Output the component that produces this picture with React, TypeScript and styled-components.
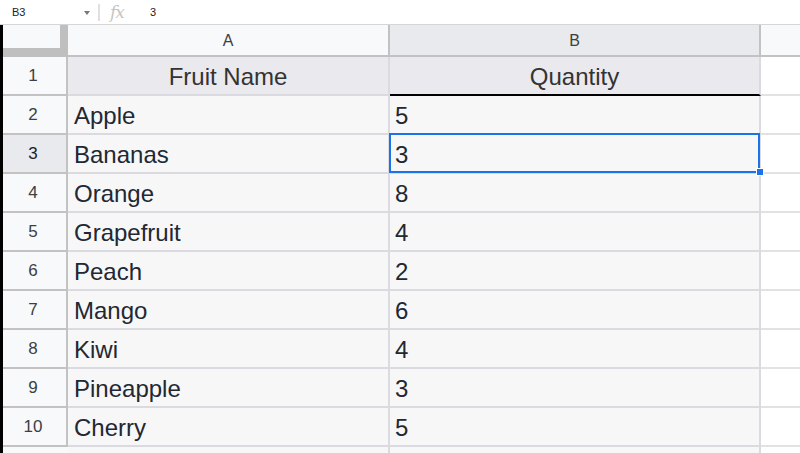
import React from "react";
import styled, { createGlobalStyle, css } from "styled-components";

const Global = createGlobalStyle`
  html, body { margin: 0; padding: 0; background: #ffffff; overflow: hidden; }
  body { font-family: "Liberation Sans", Arial, sans-serif; }
  #root { width: 800px; height: 453px; }
`;

const Page = styled.div`
  width: 800px;
  height: 453px;
  display: flex;
  flex-direction: column;
  overflow: hidden;
`;

const FormulaBar = styled.div`
  height: 24px;
  flex: 0 0 24px;
  display: flex;
  align-items: center;
  border-bottom: 1px solid #d6d6d6;
  background: #ffffff;
  font-size: 11px;
  color: #222;
`;

const NameBox = styled.div`
  width: 98px;
  padding-left: 12px;
  padding-right: 8px;
  display: flex;
  align-items: center;
  justify-content: space-between;
  box-sizing: border-box;
`;

const Caret = styled.span`
  width: 0;
  height: 0;
  border-left: 3px solid transparent;
  border-right: 3px solid transparent;
  border-top: 4px solid #777;
  margin-top: 2px;
`;

const Separator = styled.div`
  width: 2px;
  height: 17px;
  background: #e0e0e0;
`;

const Fx = styled.span`
  font-family: "DejaVu Serif", "Liberation Serif", serif;
  font-style: italic;
  font-size: 17px;
  color: #c4c4c4;
  margin-left: 10px;
  width: 40px;
  letter-spacing: -1px;
`;

const Body = styled.div`
  flex: 1;
  display: flex;
  min-height: 0;
`;

const Strip = styled.div`
  width: 3px;
  flex: 0 0 3px;
  background: #000;
`;

const Sheet = styled.div`
  flex: 1;
  display: grid;
  grid-template-columns: 65px 322px 371px 1fr;
  grid-template-rows: 32px repeat(10, 39px) 1fr;
  background: #ffffff;
`;

const Corner = styled.div`
  background: #f8f9fa;
  border-right: 8px solid #bfbfbf;
  border-bottom: 9px solid #bfbfbf;
`;

const ColHeader = styled.div<{ $selected?: boolean; $last?: boolean }>`
  background: ${(p) => (p.$selected ? "#e8eaed" : "#f8f9fa")};
  border-bottom: 2px solid #c2c2c2;
  border-right: ${(p) => (p.$last ? "none" : "2px solid #c2c2c2")};
  display: flex;
  align-items: center;
  justify-content: center;
  font-size: 16px;
  color: #3c4043;
  padding-top: 1px;
`;

const RowHeader = styled.div<{ $selected?: boolean }>`
  background: ${(p) => (p.$selected ? "#e8eaed" : "#f8f9fa")};
  border-right: 2px solid #c2c2c2;
  border-bottom: 2px solid #c2c2c2;
  display: flex;
  align-items: center;
  justify-content: center;
  font-size: 17px;
  color: ${(p) => (p.$selected ? "#202124" : "#3c4043")};
  padding-right: 3px;
  padding-top: 1px;
`;

const Cell = styled.div<{
  $head?: boolean;
  $thick?: boolean;
  $selected?: boolean;
}>`
  position: relative;
  background: ${(p) => (p.$head ? "#e9e9ee" : "#f7f7f7")};
  border-right: 2px solid #dadae0;
  border-bottom: ${(p) => (p.$thick ? "2px solid #000" : "2px solid #dadae0")};
  display: flex;
  align-items: center;
  justify-content: ${(p) => (p.$head ? "center" : "flex-start")};
  padding-left: ${(p) => (p.$head ? "0" : "6px")};
  font-size: 24px;
  color: ${(p) => (p.$head ? "#333333" : "#222833")};
  padding-top: 3px;
  box-sizing: border-box;
  ${(p) =>
    p.$selected &&
    css`
      &::after {
        content: "";
        position: absolute;
        left: -1px;
        top: -2px;
        right: -1px;
        bottom: -1px;
        border: 2px solid #1a73e8;
        pointer-events: none;
      }
    `}
`;

const NumCell = styled(Cell)`
  padding-left: 5px;
`;

const Handle = styled.span`
  position: absolute;
  right: -5px;
  bottom: -4px;
  width: 6px;
  height: 6px;
  background: #1a73e8;
  border: 1px solid #ffffff;
  z-index: 2;
`;

const Blank = styled.div`
  background: #ffffff;
  border-bottom: 2px solid #e2e2e2;
`;

const Filler = styled.div`
  background: #f8f9fa;
`;

const FillerCell = styled.div<{ $gray?: boolean }>`
  background: ${(p) => (p.$gray ? "#f7f7f7" : "#ffffff")};
  border-right: ${(p) => (p.$gray ? "2px solid #dadae0" : "none")};
`;

const data: [string, string][] = [
  ["Apple", "5"],
  ["Bananas", "3"],
  ["Orange", "8"],
  ["Grapefruit", "4"],
  ["Peach", "2"],
  ["Mango", "6"],
  ["Kiwi", "4"],
  ["Pineapple", "3"],
  ["Cherry", "5"],
];

export default function App() {
  return (
    <Page>
      <Global />
      <FormulaBar>
        <NameBox>
          <span>B3</span>
          <Caret />
        </NameBox>
        <Separator />
        <Fx>fx</Fx>
        <span>3</span>
      </FormulaBar>
      <Body>
        <Strip />
        <Sheet>
          <Corner />
          <ColHeader>A</ColHeader>
          <ColHeader $selected>B</ColHeader>
          <ColHeader $last />

          <RowHeader>1</RowHeader>
          <Cell $head>Fruit Name</Cell>
          <Cell $head $thick>
            Quantity
          </Cell>
          <Blank />

          {data.map(([name, qty], i) => {
            const row = i + 2;
            const sel = row === 3;
            return (
              <React.Fragment key={row}>
                <RowHeader $selected={sel}>{row}</RowHeader>
                <Cell>{name}</Cell>
                <NumCell $selected={sel}>
                  {qty}
                  {sel && <Handle />}
                </NumCell>
                <Blank />
              </React.Fragment>
            );
          })}

          <Filler />
          <FillerCell $gray />
          <FillerCell $gray />
          <FillerCell />
        </Sheet>
      </Body>
    </Page>
  );
}
